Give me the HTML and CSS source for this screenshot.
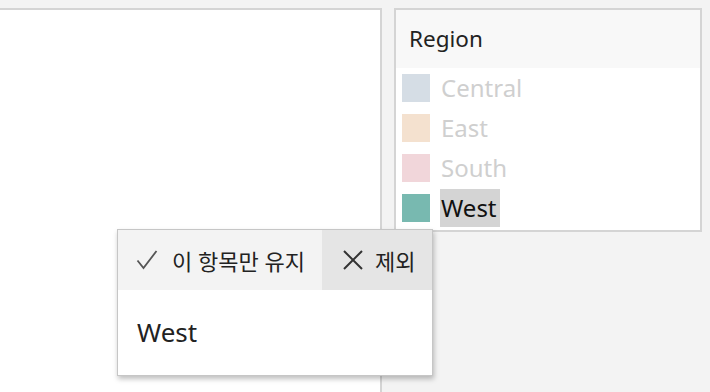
FILE: index.html
```html
<!DOCTYPE html>
<html lang="ko">
<head>
  <meta charset="UTF-8" />
  <title>Region filter</title>
  <link rel="stylesheet" href="styles.css">
</head>
<body>
  <div class="sheet">
    <div class="view"></div>

    <div class="legend">
      <div class="legend-title">Region</div>
      <ul class="legend-list">
        <li class="legend-item dim"><span class="swatch central"></span><span class="label">Central</span></li>
        <li class="legend-item dim"><span class="swatch east"></span><span class="label">East</span></li>
        <li class="legend-item dim"><span class="swatch south"></span><span class="label">South</span></li>
        <li class="legend-item selected"><span class="swatch west"></span><span class="label">West</span></li>
      </ul>
    </div>
  </div>

  <!-- tooltip menu over the view -->
  <div class="popup">
    <div class="popup-actions">
      <button class="action keep">
        <svg class="icon" width="22" height="22" viewBox="0 0 22 22">
          <path d="M1.5 11.5 L7.5 19 L20.5 2" fill="none" stroke="#555" stroke-width="1.8" />
        </svg>
        <span>이 항목만 유지</span>
      </button>
      <button class="action exclude">
        <svg class="icon" width="22" height="22" viewBox="0 0 22 22">
          <path d="M2 2 L20 20 M20 2 L2 20" fill="none" stroke="#333" stroke-width="2" />
        </svg>
        <span>제외</span>
      </button>
    </div>
    <div class="popup-body">West</div>
  </div>
</body>
</html>
```

FILE: styles.css
```css
:root {
  --bg: #f3f3f3;
  --border: #d4d4d4;
  --text: #222;
  --muted: #cfcfcf;
}
* { box-sizing: border-box; }
body {
  margin: 0;
  background: var(--bg);
  font-family: 'Noto Sans', 'Noto Sans CJK KR', sans-serif;
  color: var(--text);
  height: 392px;
  overflow: hidden;
}
.sheet {
  display: flex;
  align-items: flex-start;
  padding-top: 8px;
}
.view {
  width: 382px;
  height: 400px;
  background: #fff;
  border-top: 2px solid var(--border);
  border-right: 2px solid var(--border);
}
.legend {
  margin-left: 12px;
  width: 308px;
  height: 224px;
  background: #fff;
  border: 2px solid var(--border);
}
.legend-title {
  background: #f8f8f8;
  height: 58px;
  padding: 14px 0 0 13px;
  font-size: 22.5px;
  line-height: 30px;
}
.legend-list {
  list-style: none;
  margin: 0;
  padding: 0 0 0 6px;
}
.legend-item {
  display: flex;
  align-items: center;
  height: 40px;
}
.swatch {
  width: 28px;
  height: 28px;
  margin-right: 10px;
}
.central { background: #d5dde5; }
.east { background: #f4e1cf; }
.south { background: #f1d6da; }
.west { background: #78b9b0; }
.label {
  font-size: 24px;
  line-height: 38px;
  padding: 0 3px 0 1px;
}
.dim .label { color: var(--muted); }
.selected .label {
  background: #d4d4d4;
  color: #111;
}
.popup {
  position: absolute;
  left: 117px;
  top: 229px;
  width: 316px;
  background: #fff;
  border: 1px solid #c6c6c6;
  box-shadow: 1px 3px 5px rgba(0,0,0,0.25);
}
.popup-actions {
  display: flex;
  height: 60px;
}
.action {
  display: flex;
  align-items: center;
  gap: 14px;
  border: none;
  margin: 0;
  font-family: inherit;
  font-size: 22px;
  color: #222;
  cursor: pointer;
}
.keep {
  width: 204px;
  background: #f3f3f3;
  padding: 0 0 0 18px;
}
.exclude {
  flex: 1;
  background: #e5e5e5;
  padding: 0 0 0 20px;
  gap: 11px;
}
.popup-body {
  padding: 26px 0 0 19px;
  height: 85px;
  font-size: 26px;
  line-height: 32px;
}
```
